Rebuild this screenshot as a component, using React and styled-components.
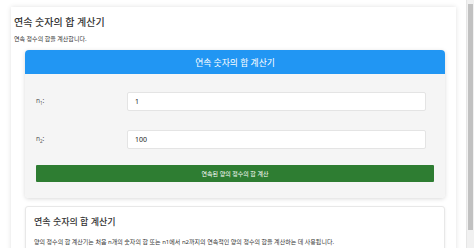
import React from "react";
import styled, { createGlobalStyle } from "styled-components";

const GlobalStyle = createGlobalStyle`
  body {
    margin: 0;
    background: #ffffff;
    font-family: "Noto Sans", "Noto Sans CJK KR", sans-serif;
    color: #333;
  }
`;

const Page = styled.div`
  padding: 7px 18px 0 11px;
`;

const Sheet = styled.div`
  background: #fff;
  box-shadow: 0 0 5px rgba(0, 0, 0, 0.12);
  padding: 5px 11px 20px 3px;
  height: 290px;
`;

const ScrollTrack = styled.div`
  position: fixed;
  top: 0;
  right: 0;
  width: 7px;
  height: 100%;
  background: #f1f1f1;
  border-left: 1px solid #e6e6e6;
`;

const ScrollThumb = styled.div`
  position: absolute;
  top: 4px;
  left: 1px;
  right: 1px;
  height: 226px;
  background: #c1c1c1;
`;

const Title = styled.h1`
  font-size: 10px;
  font-weight: 500;
  margin: 2px 0 0;
  line-height: 16px;
`;

const Lead = styled.p`
  font-size: 6px;
  margin: 4px 0 0;
  line-height: 10px;
`;

const Card = styled.div`
  margin: 6px 0 0 11px;
  border-radius: 4px;
  box-shadow: 0 1px 4px rgba(0, 0, 0, 0.15);
  overflow: hidden;
`;

const CardHead = styled.div`
  background: #2196f3;
  color: #fff;
  height: 24px;
  display: flex;
  align-items: center;
  justify-content: center;
  font-size: 8.8px;
`;

const CardBody = styled.div`
  background: #f5f5f5;
  padding: 18px 11px 16px;
  display: flex;
  flex-direction: column;
`;

const Row = styled.div`
  display: grid;
  grid-template-columns: 91px 299px;
  align-items: center;
  margin-bottom: ${(p) => p.$gap}px;
`;

const Label = styled.label`
  font-size: 6.5px;
  color: #555;
  sub {
    font-size: 4.5px;
  }
`;

const Input = styled.div`
  height: 19px;
  background: #fff;
  border: 1px solid #e4e4e4;
  border-radius: 2px;
  box-sizing: border-box;
  padding-left: 7px;
  display: flex;
  align-items: center;
  font-size: 7px;
  color: #222;
`;

const Button = styled.button`
  height: 17px;
  border: none;
  border-radius: 1px;
  background: #2e7d32;
  color: #fff;
  font-family: inherit;
  font-size: 6px;
  padding: 0;
`;

const InfoCard = styled.div`
  margin: 8px 0 0 11px;
  background: #fff;
  border: 1px solid #e8e8e8;
  border-radius: 3px;
  box-shadow: 0 1px 3px rgba(0, 0, 0, 0.08);
  padding: 8px 8px 14px;
`;

const InfoTitle = styled.h2`
  font-size: 9px;
  font-weight: 500;
  margin: 0;
  line-height: 14px;
`;

const InfoText = styled.p`
  font-size: 6px;
  margin: 8px 0 0;
  line-height: 10px;
`;

export default function App() {
  return (
    <>
      <GlobalStyle />
      <Page>
        <Sheet>
          <Title>연속 숫자의 합 계산기</Title>
          <Lead>연속 정수의 합을 계산합니다.</Lead>
          <Card>
            <CardHead>연속 숫자의 합 계산기</CardHead>
            <CardBody>
              <Row $gap={19}>
                <Label>
                  n<sub>1</sub>:
                </Label>
                <Input>1</Input>
              </Row>
              <Row $gap={16}>
                <Label>
                  n<sub>2</sub>:
                </Label>
                <Input>100</Input>
              </Row>
              <Button>연속된 양의 정수의 합 계산</Button>
            </CardBody>
          </Card>
          <InfoCard>
            <InfoTitle>연속 숫자의 합 계산기</InfoTitle>
            <InfoText>
              양의 정수의 합 계산기는 처음 n개의 숫자의 합 또는 n1에서 n2까지의 연속적인 양의 정수의 합을 계산하는 데 사용됩니다.
            </InfoText>
          </InfoCard>
        </Sheet>
      </Page>
      <ScrollTrack>
        <ScrollThumb />
      </ScrollTrack>
    </>
  );
}
